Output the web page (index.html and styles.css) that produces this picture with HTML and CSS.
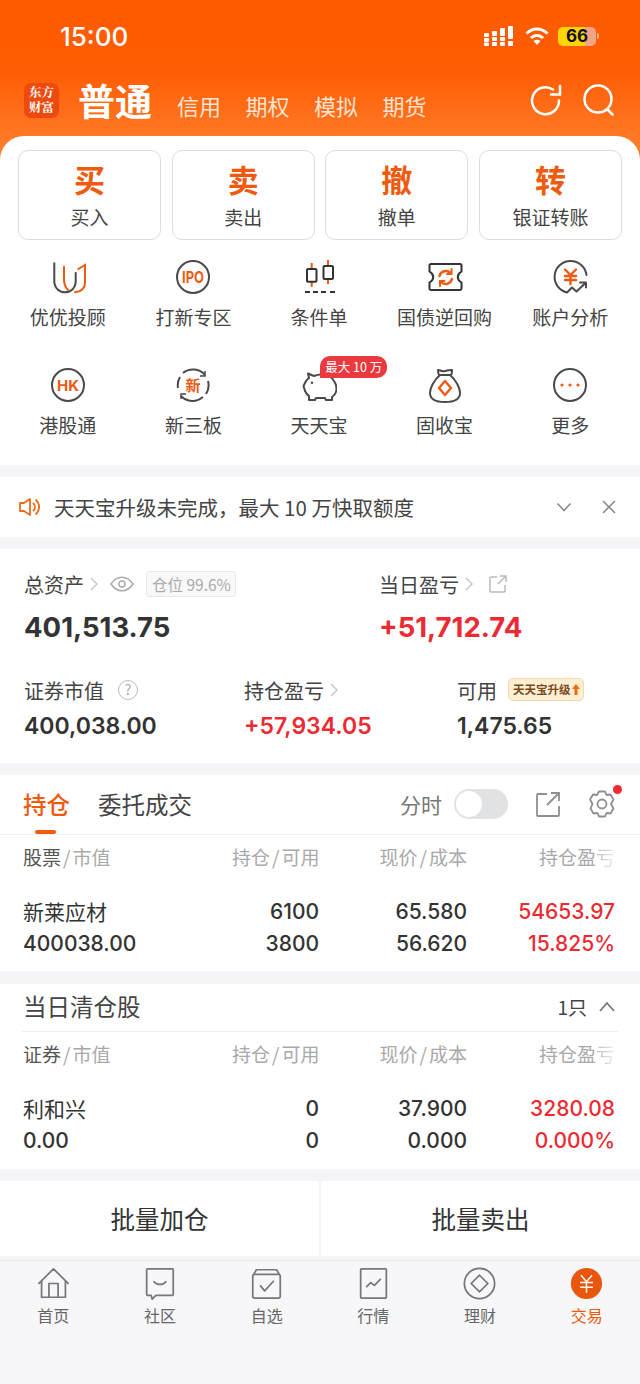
FILE: index.html
```html
<!DOCTYPE html>
<html lang="zh-CN">
<head>
    <meta charset="UTF-8">
    <meta name="viewport" content="width=device-width, initial-scale=1.0">
    <title>交易</title>
    <link rel="stylesheet" href="styles.css">
</head>
<body>
<div class="container-body">

    <div class="top">
        <div class="status-bar">
            <div class="clock">15:00</div>
            <div class="status-icons">
                <svg width="30" height="20" viewBox="0 0 30 20" fill="#fff">
                    <rect x="0" y="7" width="5" height="4" rx="1"/><rect x="0" y="12" width="5" height="4" rx="1"/><rect x="0" y="16.500" width="5" height="3.500" rx="1"/>
                    <rect x="8" y="5" width="5" height="5" rx="1"/><rect x="8" y="11" width="5" height="4" rx="1"/><rect x="8" y="16" width="5" height="4" rx="1"/>
                    <rect x="16" y="2" width="5" height="8" rx="1"/><rect x="16" y="11" width="5" height="4" rx="1"/><rect x="16" y="16" width="5" height="4" rx="1"/>
                    <rect x="24" y="0" width="5" height="13" rx="1"/><rect x="24" y="15" width="5" height="5" rx="1"/>
                </svg>
                <svg class="wifi" width="24" height="18" viewBox="0 0 24 18" fill="none" stroke="#fff" stroke-width="3">
                    <path d="M1.500 6.500C8 .5 16 .5 22.500 6.500"/>
                    <path d="M6 11C9.500 7.500 14.500 7.500 18 11"/>
                    <path d="M12 18l-3.500-4c2-1.700 5-1.700 7 0z" fill="#fff" stroke="none"/>
                </svg>
                <div class="battery"><span>66</span></div>
            </div>
        </div>
        <div class="nav">
            <div class="logo">东方<br>财富</div>
            <div class="nav-main">普通</div>
            <div class="nav-tab">信用</div>
            <div class="nav-tab">期权</div>
            <div class="nav-tab">模拟</div>
            <div class="nav-tab">期货</div>
            <div class="nav-icons">
                <svg width="34" height="32" viewBox="0 0 34 32" fill="none" stroke="#fff" stroke-width="2.500" stroke-linecap="round">
                    <path d="M30 16.500A13.500 13.500 0 1 1 24 5.500"/>
                    <path d="M31 2v8.500h-9"/>
                </svg>
                <svg width="32" height="32" viewBox="0 0 32 32" fill="none" stroke="#fff" stroke-width="2.500" stroke-linecap="round">
                    <circle cx="15" cy="15" r="13.500"/>
                    <path d="M24 25l5.500 5.500"/>
                </svg>
            </div>
        </div>
    </div>

    <div class="sec-menu">
        <div class="quick-row">
            <div class="quick-btn"><div class="quick-big">买</div><div class="quick-sub">买入</div></div>
            <div class="quick-btn"><div class="quick-big">卖</div><div class="quick-sub">卖出</div></div>
            <div class="quick-btn"><div class="quick-big">撤</div><div class="quick-sub">撤单</div></div>
            <div class="quick-btn"><div class="quick-big">转</div><div class="quick-sub">银证转账</div></div>
        </div>
        <div class="menu-grid">
            <div class="menu-item">
                <svg width="36" height="36" viewBox="0 0 36 36" fill="none" stroke-width="2" stroke-linecap="round">
                    <path d="M4.300 4.300V22C4.300 37 25.700 37 25.700 22V14" stroke="#4a4a4a"/>
                    <path d="M14 7.700V20C14 25 15 28 18 31" stroke="#ef5a12"/>
                    <path d="M28.300 10L35 6V24C35 29 31 33 25 33.300" stroke="#ef5a12"/>
                </svg>
                <div>优优投顾</div>
            </div>
            <div class="menu-item">
                <svg width="36" height="36" viewBox="0 0 36 36" fill="none">
                    <circle cx="18" cy="18" r="16" stroke="#4a4a4a" stroke-width="2"/>
                    <text x="18" y="24" text-anchor="middle" textLength="22" lengthAdjust="spacingAndGlyphs" class="ico-text">IPO</text>
                </svg>
                <div>打新专区</div>
            </div>
            <div class="menu-item">
                <svg width="36" height="36" viewBox="0 0 36 36" fill="none" stroke-width="2">
                    <path d="M10.700 4v6M10.700 23v5M27 1v6M27 20v5" stroke="#ef5a12"/>
                    <rect x="6" y="10" width="9.500" height="12.700" rx="1" stroke="#333"/>
                    <rect x="22.500" y="7" width="9.500" height="13" rx="1" stroke="#333"/>
                    <path d="M4 33h5M12 33h5M20 33h5M29 33h5" stroke="#333"/>
                </svg>
                <div>条件单</div>
            </div>
            <div class="menu-item">
                <svg width="36" height="36" viewBox="0 0 36 36" fill="none" stroke-width="2" stroke-linecap="round">
                    <path d="M4 5h29a1.500 1.500 0 0 1 1.500 1.500v6c-5 3-5 8 0 11v6a1.500 1.500 0 0 1-1.500 1.500H4a1.500 1.500 0 0 1-1.500-1.500v-6c5-3 5-8 0-11v-6A1.500 1.500 0 0 1 4 5z" stroke="#333"/>
                    <path d="M12.500 17a6.500 6.500 0 0 1 11-3M25 20a6.500 6.500 0 0 1-11 3" stroke="#ef5a12" stroke-width="2.500"/>
                    <path d="M24.500 10v5h-4.500M13 27v-5h4.500" stroke="#ef5a12" stroke-width="2"/>
                </svg>
                <div>国债逆回购</div>
            </div>
            <div class="menu-item">
                <svg width="36" height="36" viewBox="0 0 36 36" fill="none" stroke-width="2" stroke-linecap="round" stroke-linejoin="round">
                    <path d="M34.500 16A16 16 0 1 0 15 33.500l5-5 4.500 4 9-8.500M28 23.500h6v5" stroke="#4a4a4a"/>
                    <path d="M13 10.500l5.500 5.500 5.500-5.500M13 17h11M13 21h11M18.500 16v9" stroke="#ef5a12" stroke-width="2.400"/>
                </svg>
                <div>账户分析</div>
            </div>
            <div class="menu-item">
                <svg width="36" height="36" viewBox="0 0 36 36" fill="none">
                    <circle cx="18" cy="18" r="16" stroke="#4a4a4a" stroke-width="2"/>
                    <text x="18" y="24" text-anchor="middle" class="ico-text ico-hk">HK</text>
                </svg>
                <div>港股通</div>
            </div>
            <div class="menu-item">
                <svg width="36" height="36" viewBox="0 0 36 36" fill="none" stroke="#4a4a4a" stroke-width="2">
                    <path d="M8 6a16 16 0 0 1 22 2M33 14a16 16 0 0 1-2 13M28 30a16 16 0 0 1-22-1M3 21a16 16 0 0 1 2-11"/>
                    <path d="M30 4v5h-5M6 32v-5h5" stroke-width="1.500"/>
                    <text x="18" y="24" text-anchor="middle" class="ico-cjk" stroke="none">新</text>
                </svg>
                <div>新三板</div>
            </div>
            <div class="menu-item">
                <div class="badge">最大 10 万</div>
                <svg width="36" height="36" viewBox="0 0 36 36" fill="none" stroke="#4a4a4a" stroke-width="2" stroke-linejoin="round">
                    <path d="M7 6.500L13 9C20 6 30 8 33 14C37 20 36 27 31 30V33H25L24 31H15L14 33H8V29C6 28 5 26 4 24L2.500 19L4.500 15C5 13 7 12 8 11z"/>
                    <circle cx="11" cy="15.700" r="1.200" fill="#4a4a4a" stroke="none"/>
                </svg>
                <div>天天宝</div>
            </div>
            <div class="menu-item">
                <svg width="36" height="36" viewBox="0 0 36 36" fill="none" stroke="#4a4a4a" stroke-width="2" stroke-linejoin="round">
                    <path d="M12 8c-1-2-1-4-1-5 3 0 4 2 7 1 3-1 5-1 7-1 0 2 0 4-1 5z"/>
                    <path d="M13 8C7 13 3 21 3 26c0 6 5 9 15 9s15-3 15-9c0-5-4-13-10-18"/>
                    <path d="M18 14l6 7-6 7-6-7z" stroke="#ef5a12" stroke-width="2.400"/>
                </svg>
                <div>固收宝</div>
            </div>
            <div class="menu-item">
                <svg width="36" height="36" viewBox="0 0 36 36" fill="none">
                    <circle cx="18" cy="18" r="16" stroke="#4a4a4a" stroke-width="2"/>
                    <circle cx="10" cy="18" r="1.600" fill="#ef5a12"/><circle cx="18" cy="18" r="1.600" fill="#ef5a12"/><circle cx="26" cy="18" r="1.600" fill="#ef5a12"/>
                </svg>
                <div>更多</div>
            </div>
        </div>
    </div>

    <div class="sec-notice">
        <svg width="22" height="20" viewBox="0 0 22 20" fill="none" stroke="#ef6a1a" stroke-width="1.800" stroke-linejoin="round" stroke-linecap="round">
            <path d="M1 6h4l6-4v16l-6-4H1z"/>
            <path d="M14.500 6.500a5 5 0 0 1 0 7M17 3a9.500 9.500 0 0 1 0 14"/>
        </svg>
        <div class="notice-text">天天宝升级未完成，最大 10 万快取额度</div>
        <svg class="notice-down" width="16" height="10" viewBox="0 0 16 10" fill="none" stroke="#8a8a8a" stroke-width="1.600"><path d="M1.500 1.500L8 8.500l6.500-7"/></svg>
        <svg class="notice-close" width="14" height="14" viewBox="0 0 14 14" fill="none" stroke="#8a8a8a" stroke-width="1.600"><path d="M1 1l12 12M13 1L1 13"/></svg>
    </div>

    <div class="sec-assets">
        <div class="assets-top">
            <div>
                <div class="label-row">
                    <span>总资产</span>
                    <svg class="chev" width="9" height="14" viewBox="0 0 9 14" fill="none" stroke="#c4c4c4" stroke-width="1.400"><path d="M1 1l6 6-6 6"/></svg>
                    <svg class="eye" width="24" height="16" viewBox="0 0 24 16" fill="none" stroke="#aaa" stroke-width="1.500"><path d="M1 8c6-9 16-9 22 0-6 9-16 9-22 0z"/><circle cx="12" cy="8" r="3"/></svg>
                    <span class="pos-tag">仓位 99.6%</span>
                </div>
                <div class="big-num">401,513.75</div>
            </div>
            <div>
                <div class="label-row">
                    <span>当日盈亏</span>
                    <svg class="chev" width="9" height="14" viewBox="0 0 9 14" fill="none" stroke="#c4c4c4" stroke-width="1.400"><path d="M1 1l6 6-6 6"/></svg>
                    <svg class="share-small" width="18" height="18" viewBox="0 0 18 18" fill="none" stroke="#bbb" stroke-width="1.500"><path d="M8 2H2a1 1 0 0 0-1 1v13a1 1 0 0 0 1 1h13a1 1 0 0 0 1-1V10M9 9l8-8M11 1h6v6"/></svg>
                </div>
                <div class="big-num red">+51,712.74</div>
            </div>
        </div>
        <div class="assets-bottom">
            <div>
                <div class="label-row">
                    <span>证券市值</span>
                    <span class="help">?</span>
                </div>
                <div class="mid-num">400,038.00</div>
            </div>
            <div>
                <div class="label-row">
                    <span>持仓盈亏</span>
                    <svg class="chev" width="9" height="14" viewBox="0 0 9 14" fill="none" stroke="#c4c4c4" stroke-width="1.400"><path d="M1 1l6 6-6 6"/></svg>
                </div>
                <div class="mid-num red">+57,934.05</div>
            </div>
            <div>
                <div class="label-row">
                    <span>可用</span>
                    <span class="upgrade">天天宝升级<svg width="8" height="11" viewBox="0 0 8 11" fill="#ee6a12"><path d="M4 0l4 5H5.500v6h-3V5H0z"/></svg></span>
                </div>
                <div class="mid-num">1,475.65</div>
            </div>
        </div>
    </div>

    <div class="sec-positions">
        <div class="tabs">
            <div class="tab active">持仓</div>
            <div class="tab">委托成交</div>
            <div class="tabs-right">
                <span class="fen">分时</span>
                <div class="toggle"><div class="knob"></div></div>
                <svg class="share" width="25" height="25" viewBox="0 0 25 25" fill="none" stroke="#8f8f8f" stroke-width="1.800"><path d="M11 2H2a1 1 0 0 0-1 1v20a1 1 0 0 0 1 1h20a1 1 0 0 0 1-1V14M11 13L23 1M15 1h8v8"/></svg>
                <div class="gear">
                    <svg width="28" height="28" viewBox="0 0 28 28" fill="none" stroke="#8f8f8f" stroke-width="1.800" stroke-linejoin="round">
                        <path d="M11 1.500h6l1.500 3.500 4-.5 3 5-2.500 4.500 2.500 4.500-3 5-4-.5-1.500 3.500h-6l-1.500-3.500-4 .5-3-5L4.500 14 2 9.500l3-5 4 .5z"/>
                        <circle cx="14" cy="14" r="4.500"/>
                    </svg>
                    <span class="dot"></span>
                </div>
            </div>
        </div>
        <div class="table-head">
            <div><b>股票</b><span class="sl">/</span>市值</div><div>持仓<span class="sl">/</span>可用</div><div>现价<span class="sl">/</span>成本</div><div>持仓盈<i>亏</i></div>
        </div>
        <div class="table-row">
            <div>新莱应材</div><div>6100</div><div>65.580</div><div class="red">54653.97</div>
            <div>400038.00</div><div>3800</div><div>56.620</div><div class="red">15.825%</div>
        </div>
    </div>

    <div class="sec-cleared">
        <div class="cleared-title">
            <div class="cleared-name">当日清仓股</div>
            <div class="cleared-count">1只</div>
            <svg width="18" height="11" viewBox="0 0 18 11" fill="none" stroke="#777" stroke-width="1.800"><path d="M2 10l7-8 7 8"/></svg>
        </div>
        <div class="table-head">
            <div><b>证券</b><span class="sl">/</span>市值</div><div>持仓<span class="sl">/</span>可用</div><div>现价<span class="sl">/</span>成本</div><div>持仓盈<i>亏</i></div>
        </div>
        <div class="table-row">
            <div>利和兴</div><div>0</div><div>37.900</div><div class="red">3280.08</div>
            <div>0.00</div><div>0</div><div>0.000</div><div class="red">0.000%</div>
        </div>
    </div>

    <div class="sec-batch">
        <div class="batch-btn">批量加仓</div>
        <div class="batch-btn">批量卖出</div>
    </div>

    <div class="tabbar">
        <div class="bar-item">
            <svg width="33" height="33" viewBox="0 0 36 36" fill="none" stroke="#777" stroke-width="1.900" stroke-linejoin="round">
                <path d="M1.500 18.500L18 2l16.500 16.500M5 15.500V33h26V15.500M13 33V18h10v15"/>
            </svg>
            <div>首页</div>
        </div>
        <div class="bar-item">
            <svg width="33" height="33" viewBox="0 0 36 36" fill="none" stroke="#777" stroke-width="1.900" stroke-linejoin="round">
                <path d="M5 2h27a1 1 0 0 1 1 1v27a1 1 0 0 1-1 1H14l-4 4-1-4H5a1 1 0 0 1-1-1V3a1 1 0 0 1 1-1z"/>
                <path d="M12 16c3 4 10 4 13 0" stroke-linecap="round"/>
            </svg>
            <div>社区</div>
        </div>
        <div class="bar-item">
            <svg width="33" height="33" viewBox="0 0 36 36" fill="none" stroke="#777" stroke-width="1.900" stroke-linejoin="round">
                <path d="M4 8l3-5h22l3 5"/>
                <rect x="3" y="8" width="30" height="26" rx="2"/>
                <path d="M11 20l5 6 10-11"/>
            </svg>
            <div>自选</div>
        </div>
        <div class="bar-item">
            <svg width="33" height="33" viewBox="0 0 36 36" fill="none" stroke="#777" stroke-width="1.900" stroke-linejoin="round">
                <rect x="4" y="2" width="28" height="32" rx="1"/>
                <path d="M10 22l5-5 4 3 7-7"/>
            </svg>
            <div>行情</div>
        </div>
        <div class="bar-item">
            <svg width="33" height="33" viewBox="0 0 36 36" fill="none" stroke="#777" stroke-width="1.900">
                <circle cx="18" cy="18" r="16.500"/>
                <path d="M18 9l9 9-9 9-9-9z"/>
            </svg>
            <div>理财</div>
        </div>
        <div class="bar-item active">
            <svg width="33" height="33" viewBox="0 0 36 36" fill="none">
                <circle cx="18" cy="18" r="17" fill="#e9570f"/>
                <path d="M12 9l6 7 6-7M11 17h14M11 22h14M18 16v12" stroke="#fff" stroke-width="1.600"/>
            </svg>
            <div>交易</div>
        </div>
    </div>

</div>
</body>
</html>
```

FILE: styles.css
```css
:root{
    --colmain: #ee5a0e;
    --colred: #ec2a33;
    --coltext: #333;
    --colgrey: #8f8f8f;
    --colgap: #f4f5f8;
    --colline: #eeeeee;
}
*{
    box-sizing: border-box;
}
html, body{
    margin: 0;
    padding: 0;
}
body{
    width: 640px;
    height: 1384px;
    overflow: hidden;
    background: var(--colgap);
    color: var(--coltext);
    font-family: "Noto Sans CJK SC", "Inter", sans-serif;
}
.container-body{
    display: flex;
    flex-direction: column;
    height: 1384px;
}
.red{
    color: var(--colred);
}

/* top orange part */
.top{
    height: 160px;
    margin-bottom: -24px;
    flex-shrink: 0;
    background: linear-gradient(180deg, #ff5a00 0%, #ff5d03 45%, #ff8233 100%);
    color: #fff;
}
.status-bar{
    height: 72px;
    display: flex;
    align-items: center;
    justify-content: space-between;
    padding: 0 44px 0 60px;
}
.clock{
    font-family: "Inter", sans-serif;
    font-size: 26px;
    font-weight: 500;
}
.status-icons{
    display: flex;
    align-items: center;
}
.wifi{
    margin-left: 11px;
}
.battery{
    position: relative;
    width: 38px;
    height: 19px;
    margin-left: 9px;
    border-radius: 5px;
    background: linear-gradient(90deg, #ffd60a 0 70%, #f2a585 70% 100%);
    display: flex;
    align-items: center;
    justify-content: center;
    color: #111;
    font: 700 17px "Inter", sans-serif;
}
.battery::after{
    content: "";
    position: absolute;
    top: 6px;
    right: -3px;
    width: 2px;
    height: 6px;
    border-radius: 0 2px 2px 0;
    background: #f8b896;
}
.nav{
    height: 64px;
    display: flex;
    align-items: center;
    padding: 0 25px 8px 24px;
}
.logo{
    width: 35px;
    height: 35px;
    border-radius: 7px;
    background: #ee4a10;
    font-family: "Liberation Serif", "Noto Serif CJK SC", "Noto Sans CJK SC", serif;
    font-size: 12.500px;
    font-weight: 700;
    line-height: 15px;
    text-align: center;
    padding-top: 3px;
}
.nav-main{
    margin-left: 19px;
    margin-right: 0.500px;
    font-size: 37px;
    font-weight: 700;
    line-height: 44px;
}
.nav-tab{
    margin: 9px 0 0 24.500px;
    font-size: 22px;
    line-height: 30px;
    color: #ffe3d2;
}
.nav-icons{
    margin-left: auto;
    display: flex;
    gap: 20px;
    margin-top: 0;
}

/* quick actions and menu */
.sec-menu{
    position: relative;
    height: 329px;
    flex-shrink: 0;
    background: #fff;
    border-radius: 24px 24px 0 0;
    padding: 14px 18px 0;
}
.quick-row{
    display: grid;
    grid-template-columns: repeat(4, 143px);
    justify-content: space-between;
}
.quick-btn{
    height: 90px;
    border: 1px solid #ddd;
    border-radius: 10px;
    text-align: center;
}
.quick-big{
    margin-top: 7px;
    font-size: 31px;
    font-weight: 700;
    line-height: 42px;
    color: var(--colmain);
}
.quick-sub{
    font-size: 19px;
    line-height: 26px;
    margin-top: 4px;
    color: #444;
}
.menu-grid{
    display: grid;
    grid-template-columns: repeat(5, 125.600px);
    grid-auto-rows: 108px;
    margin: 19px -13px 0;
}
.menu-item{
    position: relative;
    display: flex;
    flex-direction: column;
    align-items: center;
    font-size: 19px;
    line-height: 26px;
    color: #444;
}
.menu-item svg{
    margin-bottom: 9px;
}
.ico-text{
    font: 700 16px "Inter", sans-serif;
    fill: #ef5a12;
}
.ico-hk{
    font-size: 15px;
}
.ico-cjk{
    font: 700 15px "Noto Sans CJK SC", sans-serif;
    fill: #ef5a12;
}
.badge{
    position: absolute;
    top: -11px;
    left: 64px;
    width: 67px;
    height: 22px;
    white-space: nowrap;
    border-radius: 10px 10px 10px 0;
    background: #e93a3f;
    color: #fff;
    font-size: 12.500px;
    line-height: 22px;
    text-align: center;
}

/* notice */
.sec-notice{
    margin-top: 12px;
    height: 60px;
    flex-shrink: 0;
    background: #fff;
    display: flex;
    align-items: center;
    padding: 0 24px 0 19px;
}
.notice-text{
    margin-left: 13px;
    font-size: 20.500px;
    color: #444;
    flex: 1;
}
.notice-close{
    margin-left: 30px;
}

/* assets */
.sec-assets{
    margin-top: 12px;
    height: 214px;
    flex-shrink: 0;
    background: #fff;
    padding: 21px 0 0 24px;
}
.assets-top{
    display: grid;
    grid-template-columns: 355px 1fr;
}
.assets-bottom{
    display: grid;
    grid-template-columns: 220px 213px 1fr;
    margin-top: 31px;
}
.label-row{
    display: flex;
    align-items: center;
    height: 28px;
    font-size: 20px;
    color: #444;
}
.chev{
    margin-left: 6px;
}
.eye{
    margin-left: 11px;
}
.share-small{
    margin-left: 15px;
}
.pos-tag{
    margin-left: 12px;
    height: 26px;
    padding: 0 4px 0 5px;
    border: 1px solid #e8e8e8;
    border-radius: 3px;
    background: #f8f8f8;
    color: #aaa;
    font-size: 15.500px;
    line-height: 24px;
    white-space: nowrap;
}
.big-num{
    margin-top: 11px;
    font: 700 27.500px/36px "Inter", sans-serif;
    color: #333;
}
.big-num.red{
    color: var(--colred);
}
.mid-num{
    margin-top: 7px;
    font: 600 23px/30px "Inter", sans-serif;
    color: #333;
}
.mid-num.red{
    color: var(--colred);
}
.help{
    margin-left: 14px;
    width: 20px;
    height: 20px;
    border: 1.500px solid #bbb;
    border-radius: 50%;
    color: #aaa;
    font-size: 14px;
    line-height: 17px;
    text-align: center;
}
.upgrade{
    margin: -2px 0 0 11px;
    height: 23px;
    padding: 0 3px 0 4px;
    display: flex;
    align-items: center;
    gap: 1px;
    white-space: nowrap;
    border: 1px solid #f7d9a8;
    border-radius: 5px;
    background: #fdf0d2;
    color: #7a4a1c;
    font-size: 11.500px;
    font-weight: 700;
}

/* positions table */
.sec-positions{
    margin-top: 12px;
    height: 196px;
    flex-shrink: 0;
    background: #fff;
}
.tabs{
    height: 60px;
    display: flex;
    align-items: center;
    padding: 0 23px 1px;
    border-bottom: 1px solid #f2f2f2;
}
.tab{
    position: relative;
    font-size: 23.500px;
    color: #444;
    margin-right: 28px;
}
.tab.active{
    color: var(--colmain);
    font-weight: 500;
}
.tab.active::after{
    content: "";
    position: absolute;
    left: 12px;
    bottom: -13px;
    width: 21px;
    height: 4px;
    border-radius: 2px;
    background: var(--colmain);
}
.tabs-right{
    margin-left: auto;
    display: flex;
    align-items: center;
}
.fen{
    font-size: 21px;
    color: #777;
}
.toggle{
    margin-left: 12px;
    width: 54px;
    height: 30px;
    border-radius: 15px;
    background: #e1e2e4;
    padding: 2px;
}
.knob{
    width: 26px;
    height: 26px;
    border-radius: 50%;
    background: #fff;
}
.share{
    margin-left: 28px;
}
.gear{
    position: relative;
    margin-left: 27px;
    margin-right: 1px;
    height: 28px;
}
.dot{
    position: absolute;
    top: -5px;
    right: -6px;
    width: 9px;
    height: 9px;
    border-radius: 50%;
    background: #ee2a33;
}
.table-head, .table-row{
    display: grid;
    grid-template-columns: 209px 87px 148px 1fr;
    padding: 0 25px 0 23px;
}
.table-head{
    height: 46px;
    padding-bottom: 4px;
    align-items: center;
    font-size: 19px;
    color: #a9a9a9;
    white-space: nowrap;
}
.table-head > div{
    text-align: right;
}
.table-head > div:first-child{
    text-align: left;
}
.table-head b{
    font-weight: 400;
    color: #555;
}
.table-head .sl{
    margin: 0 2px;
}
.table-head i{
    font-style: normal;
    background: linear-gradient(90deg, #bbb, #eee);
    -webkit-background-clip: text;
    background-clip: text;
    color: transparent;
}
.table-row{
    margin-top: 14px;
    grid-auto-rows: 32px;
    align-items: center;
    font: 500 21px "Inter", "Noto Sans CJK SC", sans-serif;
    color: #333;
}
.table-row > div{
    text-align: right;
}
.table-row > div:nth-child(4n+1){
    text-align: left;
}
.table-row > div:first-child{
    font-weight: 400;
}
.table-row .red{
    color: var(--colred);
}

/* cleared today */
.sec-cleared{
    margin-top: 13px;
    height: 185px;
    flex-shrink: 0;
    background: #fff;
}
.cleared-title{
    height: 48px;
    margin: 0 22px;
    padding: 0 2px 3px 1px;
    display: flex;
    align-items: center;
    border-bottom: 1px solid #eee;
}
.cleared-name{
    font-size: 23.500px;
    color: #444;
}
.cleared-count{
    margin-left: auto;
    margin-right: 11px;
    font-size: 19px;
    color: #444;
}

/* batch buttons */
.sec-batch{
    margin-top: 12px;
    height: 75px;
    flex-shrink: 0;
    display: grid;
    grid-template-columns: 319px 1fr;
    gap: 2px;
    background: var(--colgap);
}
.batch-btn{
    background: #fff;
    font-size: 24.500px;
    line-height: 75px;
    text-align: center;
    color: #333;
}

/* bottom tab bar */
.tabbar{
    margin-top: 4px;
    flex: 1;
    border-top: 1px solid #e6e6ec;
    background: #f7f7fa;
    display: grid;
    grid-template-columns: repeat(6, 1fr);
    grid-auto-rows: min-content;
    padding: 6px 0 0 0;
}
.bar-item{
    display: flex;
    flex-direction: column;
    align-items: center;
    font-size: 16px;
    line-height: 22px;
    color: #666;
}
.bar-item.active{
    color: var(--colmain);
}
.bar-item svg{
    margin-bottom: 4px;
}
```
